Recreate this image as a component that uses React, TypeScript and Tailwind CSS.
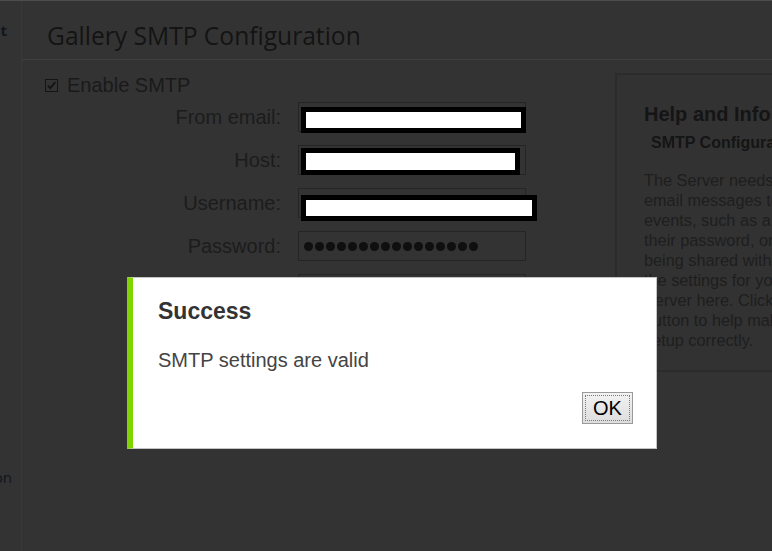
import React from "react"

// Dimmed page colours (page sits behind a modal backdrop)
const rows = [
  { label: "From email:", redact: "left-[2px] top-[4px] w-[225px] h-[26px]" },
  { label: "Host:", redact: "left-[2px] top-[2px] w-[219px] h-[27px]" },
  { label: "Username:", redact: "left-[2px] top-[6px] w-[236px] h-[26px]" },
  { label: "Password:", password: true },
  { label: "Port:" },
]

const helpLines = [
  "The Server needs to be able to send",
  "email messages to users for various",
  "events, such as a user forgetting",
  "their password, or a gallery",
  "being shared with them. Enter",
  "the settings for your SMTP",
  "Server here. Click the Test",
  "button to help make sure it is",
  "setup correctly.",
]

function CheckBox() {
  return (
    <span className="w-[13px] h-[13px] border border-[#141414] flex items-center justify-center">
      <svg width="11" height="11" viewBox="0 0 11 11">
        <path d="M1.8 5.6 L4.3 8.2 L9.3 2.2" fill="none" stroke="#141414" strokeWidth="1.8" />
      </svg>
    </span>
  )
}

function FormRow({ label, redact, password }: { label: string; redact?: string; password?: boolean }) {
  return (
    <div className="flex items-center gap-[17px] h-[30px]">
      <div className="w-[236px] text-right text-[20px] leading-6 text-[#1c1c1c]">{label}</div>
      <div className="relative w-[228px] h-[30px] border border-[#252525]">
        {password && (
          <div className="flex items-center gap-[2px] h-full pl-[5px]">
            {Array.from({ length: 16 }).map((_, i) => (
              <span key={i} className="w-[9px] h-[9px] rounded-full bg-[#0f0f0f]" />
            ))}
          </div>
        )}
        {redact && <div className={`absolute ${redact} border-[5px] border-black bg-white`} />}
      </div>
    </div>
  )
}

export default function App() {
  return (
    <div className="relative w-[772px] h-[551px] overflow-hidden bg-[#333333] border-t border-[#4d4d4d] font-['Liberation_Sans',Arial,sans-serif]">
      <div className="flex h-full">
        {/* sidebar, scrolled out of view */}
        <div className="w-[22px] shrink-0 border-r border-[#393939] overflow-hidden pr-[14px] font-['Open_Sans',sans-serif] text-[#11161b] text-[15px] leading-5">
          <div className="flex justify-end mt-[19px] font-bold whitespace-nowrap">Management</div>
          <div className="flex justify-end mt-[427px] mr-[-5px] whitespace-nowrap">Configuration</div>
        </div>

        <div className="flex-1 min-w-0">
          <div className="h-[59px] flex items-end pl-[25px] pb-[7px] border-b border-[#3e3e3e]">
            <h1 className="font-['Open_Sans',sans-serif] text-[24.6px] leading-8 text-[#141414] whitespace-nowrap">
              Gallery SMTP Configuration
            </h1>
          </div>

          <div className="flex items-start pt-[13px]">
            <div className="pl-[23px] shrink-0">
              <div className="flex items-center gap-[9px] h-6">
                <CheckBox />
                <span className="text-[20px] leading-6 text-[#1a1a1a]">Enable SMTP</span>
              </div>
              <div className="flex flex-col gap-[13px] mt-[5px]">
                {rows.map((r) => (
                  <FormRow key={r.label} {...r} />
                ))}
              </div>
            </div>

            <div className="ml-[89px] w-[300px] h-[299px] shrink-0 border-2 border-[#2b2b2b] bg-[#323232] pl-[27px] pt-[27px] whitespace-nowrap">
              <h2 className="text-[20px] leading-6 font-bold text-[#151515]">Help and Information</h2>
              <h3 className="text-[16px] leading-5 font-bold text-[#151515] ml-[7px] mt-[7px]">SMTP Configuration</h3>
              <p className="text-[16.3px] leading-5 text-[#1e1e1e] mt-[17px]">
                {helpLines.map((l, i) => (
                  <React.Fragment key={i}>
                    {l}
                    <br />
                  </React.Fragment>
                ))}
              </p>
            </div>
          </div>
        </div>
      </div>

      {/* modal */}
      <div className="absolute left-[127px] top-[276px] w-[530px] h-[172px] bg-white border border-[#c4c4c4] border-l-[6px] border-l-[#80d500] flex flex-col pl-[25px] pr-[23px] pt-[19px]">
        <div className="text-[23px] leading-7 font-bold text-[#333333]">Success</div>
        <div className="text-[20px] leading-6 text-[#444444] mt-[23px]">SMTP settings are valid</div>
        <div className="flex justify-end mt-[20px]">
          <button className="w-[51px] h-[32px] border border-[#9a9a9a] bg-gradient-to-b from-[#f2f2f2] to-[#dddddd] text-[20px] leading-6 text-black outline-1 outline-dotted outline-[#7a7a7a] -outline-offset-4">
            OK
          </button>
        </div>
      </div>
    </div>
  )
}
